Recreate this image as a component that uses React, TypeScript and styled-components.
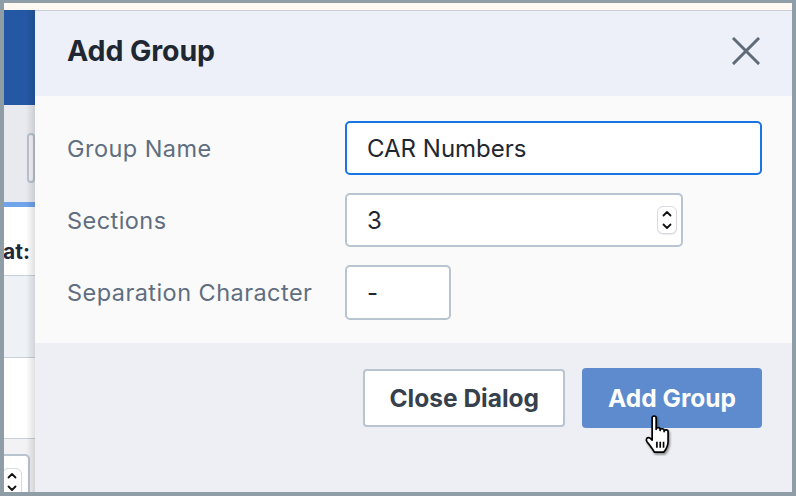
import styled, { createGlobalStyle } from 'styled-components'

const GlobalStyle = createGlobalStyle`
  html, body { margin: 0; padding: 0; }
  body {
    width: 796px;
    height: 496px;
    overflow: hidden;
    font-family: Inter, "Noto Sans", "Liberation Sans", sans-serif;
    background: #8f9ea6;
  }
`

const Frame = styled.div`
  width: 796px;
  height: 496px;
  box-sizing: border-box;
  padding: 3px 4px 4px 4px;
  background: #8f9ea6;
  display: flex;
  flex-direction: column;
`

const TopBand = styled.div`
  height: 7px;
  background: #fff8f3;
  flex: none;
`

const Content = styled.div`
  flex: 1;
  display: flex;
  min-height: 0;
`

/* the page behind the dialog, only a sliver shows */
const PageStrip = styled.div`
  width: 31px;
  flex: none;
  display: flex;
  flex-direction: column;
  position: relative;
  overflow: hidden;

  &::after {
    content: '';
    position: absolute;
    top: 0;
    right: 0;
    bottom: 0;
    width: 9px;
    background: linear-gradient(to right, rgba(0, 0, 0, 0), rgba(0, 0, 0, 0.12));
    pointer-events: none;
  }
`

const StripBlock = styled.div<{ $h: number; $bg: string; $line?: string }>`
  height: ${p => p.$h}px;
  flex: none;
  background: ${p => p.$bg};
  box-sizing: border-box;
  border-bottom: ${p => (p.$line ? `1px solid ${p.$line}` : 'none')};
  position: relative;
  display: flex;
`

const StripInput = styled.div`
  margin: 28px 0 0 23px;
  width: 20px;
  height: 50px;
  border: 2px solid #b8c4d0;
  border-radius: 5px;
  background: #f6f6f8;
  box-sizing: border-box;
`

const StripLabel = styled.div`
  margin-left: -1px;
  margin-top: 34px;
  font-weight: 700;
  font-size: 21px;
  color: #1f2937;
  white-space: nowrap;
  line-height: 1;
`

const StripBox = styled.div`
  margin: 15px 0 0 -6px;
  width: 32px;
  height: 60px;
  border: 2px solid #b8c4d0;
  border-radius: 5px;
  background: #fff;
  box-sizing: border-box;
  display: flex;
  justify-content: flex-end;
  padding: 12px 6px 0 0;
`

const Dialog = styled.div`
  flex: 1;
  display: flex;
  flex-direction: column;
  border-top: 1px solid #c9ced6;
  position: relative;
`

const Header = styled.div`
  height: 85px;
  flex: none;
  background: #edf0f8;
  display: flex;
  align-items: center;
  justify-content: space-between;
  padding: 0 30px 6px 32px;
  box-sizing: border-box;
`

const Title = styled.h2`
  margin: 0;
  font-size: 28.5px;
  font-weight: 700;
  color: #1f2733;
  letter-spacing: -0.1px;
`

const CloseButton = styled.button`
  border: none;
  background: none;
  padding: 0;
  width: 32px;
  height: 32px;
  display: flex;
  align-items: center;
  justify-content: center;
  cursor: pointer;
`

const Body = styled.div`
  height: 247px;
  flex: none;
  background: #fafafa;
  box-sizing: border-box;
  padding: 25px 30px 0 32px;
  display: flex;
  flex-direction: column;
  gap: 18px;
`

const Row = styled.div`
  display: grid;
  grid-template-columns: 278px 1fr;
  align-items: center;
`

const Label = styled.label`
  font-size: 23.5px;
  letter-spacing: 0.45px;
  color: #5f6e80;
  white-space: nowrap;
`

const FieldWrap = styled.div<{ $w: number }>`
  width: ${p => p.$w}px;
  position: relative;
`

const Input = styled.input<{ $focus?: boolean; $h: number }>`
  width: 100%;
  height: ${p => p.$h}px;
  box-sizing: border-box;
  border: 2px solid ${p => (p.$focus ? '#1b74e4' : '#b8c4d0')};
  border-radius: 5px;
  background: #fff;
  padding: 0 0 0 20px;
  font-family: inherit;
  font-size: 24px;
  color: #1f2733;
  outline: none;
  appearance: textfield;
  -moz-appearance: textfield;

  &::-webkit-inner-spin-button,
  &::-webkit-outer-spin-button {
    -webkit-appearance: none;
    margin: 0;
  }
`

const Spinner = styled.div<{ $static?: boolean }>`
  position: ${p => (p.$static ? 'static' : 'absolute')};
  right: 6px;
  top: 13px;
  width: 20px;
  height: 28px;
  border: 1px solid #d6d9de;
  border-radius: 6px;
  background: #fff;
  box-sizing: border-box;
  display: flex;
  flex-direction: column;
  align-items: center;
  justify-content: space-around;
  box-shadow: 0 1px 1px rgba(0, 0, 0, 0.08);
`

const Footer = styled.div`
  flex: 1;
  background: #eeeff4;
  display: flex;
  justify-content: flex-end;
  align-items: flex-start;
  gap: 17px;
  padding: 25px 30px 0 0;
  box-sizing: border-box;
`

const Button = styled.button<{ $primary?: boolean }>`
  height: ${p => (p.$primary ? 60 : 58)}px;
  margin-top: ${p => (p.$primary ? 0 : 1)}px;
  padding: 0 ${p => (p.$primary ? 26 : 24)}px;
  border-radius: 4px;
  border: ${p => (p.$primary ? 'none' : '2px solid #b8c4d0')};
  background: ${p => (p.$primary ? '#5d8bcd' : '#fff')};
  color: ${p => (p.$primary ? '#fff' : '#37404d')};
  font-family: inherit;
  font-size: 24.5px;
  font-weight: 700;
  cursor: pointer;
  position: relative;
`

const Cursor = styled.svg`
  position: absolute;
  left: 61px;
  top: 46px;
  pointer-events: none;
`

const Chevron = ({ up }: { up?: boolean }) => (
  <svg width="10" height="7" viewBox="0 0 10 7">
    <path
      d={up ? 'M1.5 5.5 L5 2 L8.5 5.5' : 'M1.5 1.5 L5 5 L8.5 1.5'}
      fill="none"
      stroke="#111"
      strokeWidth="1.8"
      strokeLinecap="round"
      strokeLinejoin="round"
    />
  </svg>
)

const HandCursor = () => (
  <Cursor width="36" height="42" viewBox="0 0 32 38">
    <defs>
      <filter id="sh" x="-30%" y="-30%" width="160%" height="160%">
        <feDropShadow dx="1" dy="1.5" stdDeviation="1" floodOpacity="0.45" />
      </filter>
    </defs>
    <path
      filter="url(#sh)"
      d="M8 3.5 C8 1.3 11.6 1.3 11.6 3.5 L11.6 14 C11.6 11.8 15.2 11.8 15.2 14 L15.2 15 C15.2 12.8 18.8 12.8 18.8 15 L18.8 16 C18.8 13.8 22.4 13.8 22.4 16 L22.4 25 C22.4 29 20.5 32 18.5 34.5 L10 34.5 C8.5 31.5 6 28.5 3.3 25 C1.8 22.8 3.6 20.3 6.1 21.8 L8 23.6 Z"
      fill="#fff"
      stroke="#000"
      strokeWidth="1.5"
      strokeLinejoin="round"
    />
    <path d="M12.3 25 V30.5 M15.3 25 V30.5 M18.3 25 V30.5" stroke="#000" strokeWidth="1.5" />
  </Cursor>
)

export default function App() {
  return (
    <>
      <GlobalStyle />
      <Frame>
        <TopBand />
        <Content>
          <PageStrip>
            <StripBlock $h={95} $bg="#2457a4" />
            <StripBlock $h={97} $bg="#e8eaef">
              <StripInput />
            </StripBlock>
            <StripBlock $h={5} $bg="#6fa3ea" />
            <StripBlock $h={69} $bg="#ffffff" $line="#c8d0da">
              <StripLabel>at:</StripLabel>
            </StripBlock>
            <StripBlock $h={82} $bg="#eef1f6" $line="#c8d0da" />
            <StripBlock $h={81} $bg="#ffffff" $line="#c8d0da" />
            <StripBlock $h={60} $bg="#f2f2f4">
              <StripBox>
                <Spinner $static>
                  <Chevron up />
                  <Chevron />
                </Spinner>
              </StripBox>
            </StripBlock>
          </PageStrip>
          <Dialog>
            <Header>
              <Title>Add Group</Title>
              <CloseButton aria-label="Close">
                <svg width="28" height="28" viewBox="0 0 28 28">
                  <path d="M2 2 L26 26 M26 2 L2 26" stroke="#5f6b78" strokeWidth="3" strokeLinecap="square" />
                </svg>
              </CloseButton>
            </Header>
            <Body>
              <Row>
                <Label>Group Name</Label>
                <FieldWrap $w={417}>
                  <Input $focus $h={54} defaultValue="CAR Numbers" />
                </FieldWrap>
              </Row>
              <Row>
                <Label>Sections</Label>
                <FieldWrap $w={338}>
                  <Input $h={54} type="number" defaultValue={3} />
                  <Spinner>
                    <Chevron up />
                    <Chevron />
                  </Spinner>
                </FieldWrap>
              </Row>
              <Row>
                <Label>Separation Character</Label>
                <FieldWrap $w={106}>
                  <Input $h={55} defaultValue="-" />
                </FieldWrap>
              </Row>
            </Body>
            <Footer>
              <Button>Close Dialog</Button>
              <Button $primary>
                Add Group
                <HandCursor />
              </Button>
            </Footer>
          </Dialog>
        </Content>
      </Frame>
    </>
  )
}
